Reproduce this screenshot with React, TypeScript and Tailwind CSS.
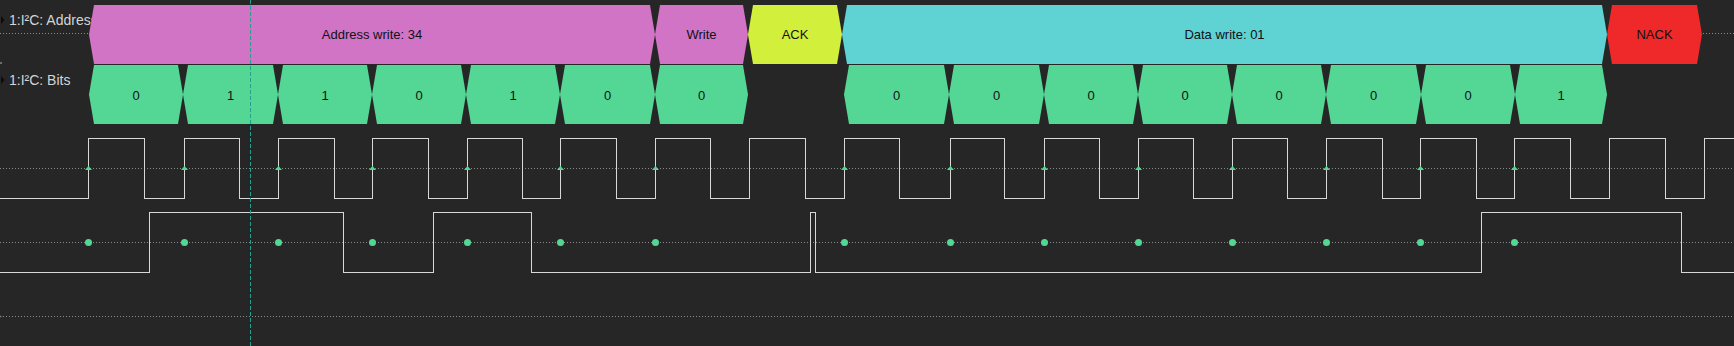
import React from "react";

const W = 1734;
const FONT = "'Liberation Sans', Arial, sans-serif";

const C = {
  bg: "#262626",
  magenta: "#d274c5",
  green: "#54d794",
  yellow: "#d2ef3b",
  cyan: "#5fd2d3",
  red: "#ef2929",
  trace: "#d8d8d8",
  dots: "#8a8a8a",
  label: "#d4d4d4",
  cursor: "#23a08e",
};

type Ann = { x0: number; x1: number; text: string; color: string };

const hexPoints = (x0: number, x1: number, top: number, bottom: number) => {
  const cap = Math.min(5, (x1 - x0) / 4);
  const mid = (top + bottom) / 2;
  return `${x0},${mid} ${x0 + cap},${top} ${x1 - cap},${top} ${x1},${mid} ${x1 - cap},${bottom} ${x0 + cap},${bottom}`;
};

const rowA: Ann[] = [
  { x0: 89, x1: 655, text: "Address write: 34", color: C.magenta },
  { x0: 655, x1: 748, text: "Write", color: C.magenta },
  { x0: 748, x1: 842, text: "ACK", color: C.yellow },
  { x0: 842, x1: 1607, text: "Data write: 01", color: C.cyan },
  { x0: 1607, x1: 1702, text: "NACK", color: C.red },
];

const mkBits = (bounds: number[], vals: string[]): Ann[] =>
  vals.map((v, i) => ({ x0: bounds[i], x1: bounds[i + 1], text: v, color: C.green }));

const rowB: Ann[] = [
  ...mkBits([89, 183, 278, 372, 466, 560, 655, 748], ["0", "1", "1", "0", "1", "0", "0"]),
  ...mkBits([844, 949, 1044, 1138, 1232, 1326, 1421, 1515, 1607], ["0", "0", "0", "0", "0", "0", "0", "1"]),
];

const sclT = [88, 144, 184, 239, 278, 334, 372, 428, 467, 522, 560, 616, 655, 710, 749, 805, 844, 899, 950, 1004, 1044, 1099, 1138, 1193, 1232, 1287, 1326, 1382, 1420, 1476, 1514, 1570, 1609, 1665, 1704];
const sdaT = [149, 343, 433, 531, 810, 815, 1481, 1681];
const samples = [88, 184, 278, 372, 467, 560, 655, 844, 950, 1044, 1138, 1232, 1326, 1420, 1514];

const wavePath = (ts: number[], hi: number, lo: number) => {
  let y = lo;
  let d = `M0 ${y}`;
  for (const t of ts) {
    const x = t + 0.5;
    d += ` H${x}`;
    y = y === lo ? hi : lo;
    d += ` V${y}`;
  }
  d += ` H${W}`;
  return d;
};

function Dotted({ y, x0 = 0, x1 = W }: { y: number; x0?: number; x1?: number }) {
  return <line x1={x0} x2={x1} y1={y} y2={y} stroke={C.dots} strokeWidth={1} strokeDasharray="1 2" shapeRendering="crispEdges" />;
}

function Label({ y, text }: { y: number; text: string }) {
  return (
    <g>
      <polygon points={`1,${y - 4} 4.5,${y} 1,${y + 4}`} fill="#0c0c0c" />
      <text x={9} y={y} fill={C.label} fontFamily={FONT} fontSize={14} dominantBaseline="central">
        {text}
      </text>
    </g>
  );
}

function AnnRow({ anns, top, bottom, textY }: { anns: Ann[]; top: number; bottom: number; textY: number }) {
  return (
    <g>
      {anns.map((a, i) => (
        <g key={i}>
          <polygon points={hexPoints(a.x0, a.x1, top, bottom)} fill={a.color} />
          <text
            x={(a.x0 + a.x1) / 2}
            y={textY}
            fill="#111"
            fontFamily={FONT}
            fontSize={13}
            textAnchor="middle"
            dominantBaseline="central"
          >
            {a.text}
          </text>
        </g>
      ))}
    </g>
  );
}

export default function App() {
  return (
    <div className="relative w-[1734px] h-[346px] overflow-hidden bg-[#262626]">
      <div className="flex flex-col">
        {/* I2C Address row */}
        <div className="h-[64px]">
          <svg width={W} height={64} className="block">
            <Dotted y={33.5} x0={0} x1={89} />
            <Dotted y={33.5} x0={1703} x1={W} />
            <Label y={20} text="1:I²C: Address" />
            <circle cx={1} cy={63} r={1.2} fill="#6e6e6e" />
            <AnnRow anns={rowA} top={5} bottom={64} textY={34.5} />
          </svg>
        </div>
        {/* I2C Bits row */}
        <div className="h-[61px]">
          <svg width={W} height={61} className="block">
            <Label y={16} text="1:I²C: Bits" />
            <AnnRow anns={rowB} top={1} bottom={60} textY={31} />
          </svg>
        </div>
        {/* SCL */}
        <div className="h-[80px]">
          <svg width={W} height={80} className="block">
            <Dotted y={43.5} />
            <path d={wavePath(sclT, 13.5, 73.5)} fill="none" stroke={C.trace} strokeWidth={1} shapeRendering="crispEdges" />
            {samples.map((x) => (
              <polygon key={x} points={`${x + 0.5 - 3.5},45 ${x + 0.5},41 ${x + 0.5 + 3.5},45`} fill={C.green} />
            ))}
          </svg>
        </div>
        {/* SDA */}
        <div className="h-[85px]">
          <svg width={W} height={85} className="block">
            <Dotted y={37.5} />
            <path d={wavePath(sdaT, 7.5, 67.5)} fill="none" stroke={C.trace} strokeWidth={1} shapeRendering="crispEdges" />
            {samples.map((x) => (
              <circle key={x} cx={x + 0.5} cy={37.5} r={3.5} fill={C.green} />
            ))}
          </svg>
        </div>
        {/* empty channel */}
        <div className="h-[56px]">
          <svg width={W} height={56} className="block">
            <circle cx={1} cy={26.5} r={1.5} fill="#5a2a33" />
            <Dotted y={26.5} />
          </svg>
        </div>
      </div>
      {/* cursor */}
      <svg width={W} height={346} className="pointer-events-none absolute inset-0">
        <line x1={250.5} x2={250.5} y1={0} y2={346} stroke={C.cursor} strokeWidth={1} strokeDasharray="4 2" shapeRendering="crispEdges" />
      </svg>
    </div>
  );
}
